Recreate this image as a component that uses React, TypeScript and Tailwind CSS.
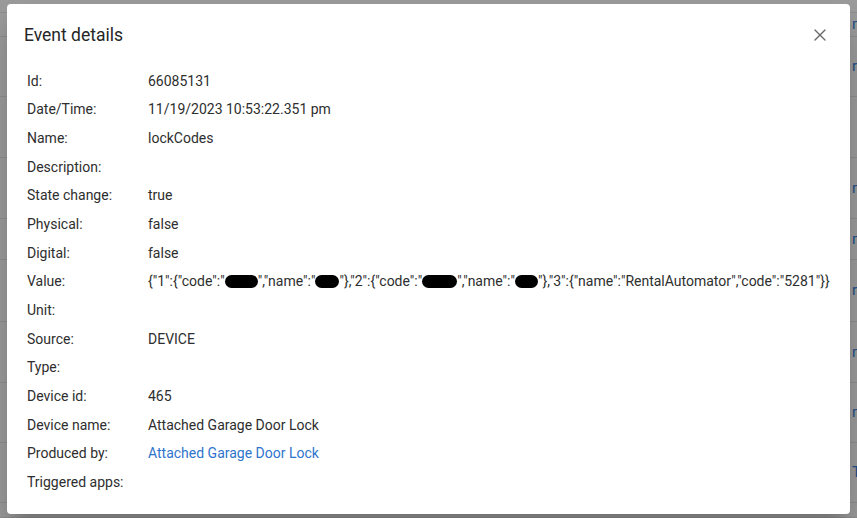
import { X } from 'lucide-react'

const font = { fontFamily: 'Roboto, "Noto Sans", sans-serif' }

function Blob({ w }: { w: number }) {
  return (
    <span
      className="inline-block h-[13px] rounded-full bg-black align-middle -mt-[2px]"
      style={{ width: w }}
    />
  )
}

function ValueJson() {
  return (
    <span className="whitespace-nowrap">
      {'{"1":{"code":"'}
      <Blob w={33} />
      {'","name":"'}
      <Blob w={24} />
      {'"},"2":{"code":"'}
      <Blob w={35} />
      {'","name":"'}
      <Blob w={23} />
      {'"},"3":{"name":"RentalAutomator","code":"5281"}}'}
    </span>
  )
}

const rows: { label: string; value?: React.ReactNode; link?: boolean }[] = [
  { label: 'Id:', value: '66085131' },
  { label: 'Date/Time:', value: '11/19/2023 10:53:22.351 pm' },
  { label: 'Name:', value: 'lockCodes' },
  { label: 'Description:' },
  { label: 'State change:', value: 'true' },
  { label: 'Physical:', value: 'false' },
  { label: 'Digital:', value: 'false' },
  { label: 'Value:', value: <ValueJson /> },
  { label: 'Unit:' },
  { label: 'Source:', value: 'DEVICE' },
  { label: 'Type:' },
  { label: 'Device id:', value: '465' },
  { label: 'Device name:', value: 'Attached Garage Door Lock' },
  { label: 'Produced by:', value: 'Attached Garage Door Lock', link: true },
  { label: 'Triggered apps:' },
]

// rows of the table behind the backdrop
const bgRows = [
  { h: 13, t: '' },
  { h: 24, t: 'm' },
  { h: 60, t: 'r' },
  { h: 61, t: '' },
  { h: 61, t: 'm' },
  { h: 41, t: 'm' },
  { h: 62, t: 'r' },
  { h: 61, t: 'm' },
  { h: 60, t: 'm' },
  { h: 60, t: 'T' },
  { h: 15, t: '' },
]

export default function App() {
  return (
    <div
      className="relative w-[857px] h-[518px] overflow-hidden bg-[#9b9b9b]"
      style={font}
    >
      <div className="flex flex-col">
        {bgRows.map((r, i) => (
          <div
            key={i}
            className="flex items-center justify-end border-b border-[#8e8e8e] text-[15px] text-[#1d4f86]"
            style={{ height: r.h }}
          >
            <span className="w-[5px] overflow-hidden">{r.t}</span>
          </div>
        ))}
      </div>

      <div className="absolute left-[7px] top-[4px] w-[843px] h-[510px] rounded bg-white shadow-[0_11px_15px_-7px_rgba(0,0,0,0.2),0_24px_38px_3px_rgba(0,0,0,0.14)]">
        <div className="h-[62px] flex items-center justify-between pl-[17px] pr-[18px]">
          <h2 className="text-[17.5px] text-[#262626]">Event details</h2>
          <button className="w-6 h-6 flex items-center justify-center text-[#6b6b6b]">
            <X size={20} strokeWidth={1.6} />
          </button>
        </div>
        <div className="flex flex-col pt-px pl-[20px] text-[14px] text-[#2e2e2e]">
          {rows.map((r) => (
            <div key={r.label} className="flex items-center h-[28.66px]">
              <div className="w-[121px] shrink-0">{r.label}</div>
              <div className={r.link ? 'text-[#2f74cc]' : ''}>{r.value}</div>
            </div>
          ))}
        </div>
      </div>
    </div>
  )
}
